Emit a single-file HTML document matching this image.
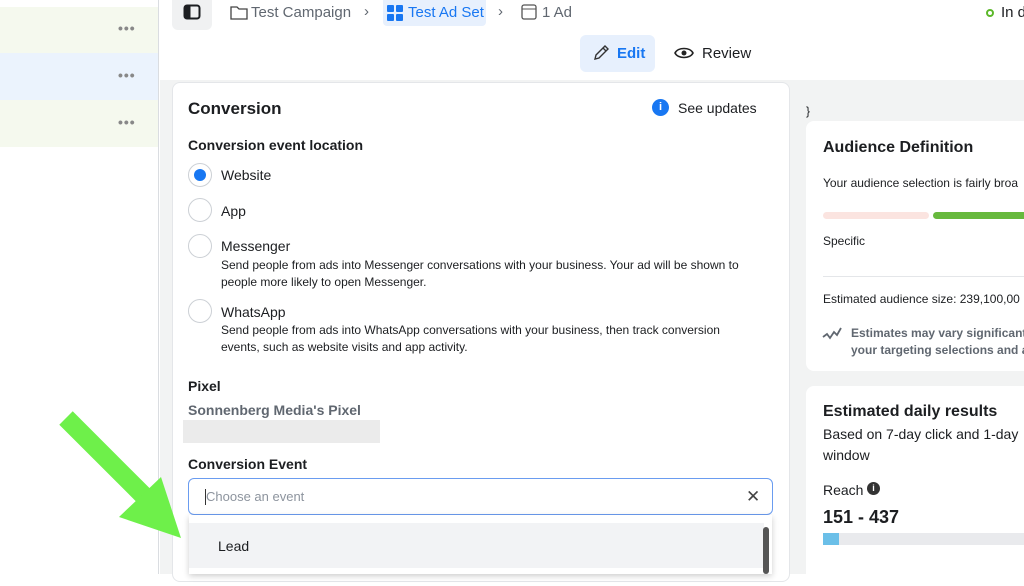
<!DOCTYPE html>
<html><head><meta charset="utf-8"><style>
*{margin:0;padding:0;box-sizing:border-box}
body{width:1024px;height:574px;overflow:hidden;background:#fff;font-family:"Liberation Sans",Arial,sans-serif;color:#1c1e21;position:relative}
.abs{position:absolute}
.dots{position:absolute;left:118px;font-size:14px;color:#888;letter-spacing:1px;font-weight:bold}
.t{position:absolute;white-space:nowrap}
.radio{position:absolute;left:188px;width:24px;height:24px;border:1.5px solid #ccd0d5;border-radius:50%;background:#fff}
.small{font-size:12px;line-height:17px;color:#1c1e21}
</style></head><body>
<div class="abs" style="left:0;top:0;width:159px;height:574px;background:#fff;border-right:1px solid #dadde1"></div>
<div class="abs" style="left:0;top:7px;width:158px;height:46px;background:#f5f9ee"></div>
<div class="abs" style="left:0;top:53px;width:158px;height:47px;background:#ebf3fd"></div>
<div class="abs" style="left:0;top:100px;width:158px;height:47px;background:#f5f9ee"></div>
<div class="dots" style="top:20px">•••</div>
<div class="dots" style="top:67px">•••</div>
<div class="dots" style="top:114px">•••</div>
<div class="abs" style="left:160px;top:80px;width:864px;height:494px;background:#f2f3f3"></div>
<div class="abs" style="left:172px;top:0;width:40px;height:30px;background:#f0f1f2;border-radius:0 0 6px 6px"></div>
<svg class="abs" style="left:183px;top:4px" width="18" height="16" viewBox="0 0 18 16"><rect x="1.5" y="1.5" width="15" height="13" rx="2.5" fill="none" stroke="#1c1e21" stroke-width="2"/><rect x="1.5" y="1.5" width="6" height="13" fill="#1c1e21"/></svg>
<svg class="abs" style="left:230px;top:4px" width="18" height="16" viewBox="0 0 18 16"><path d="M1 3h6l2 2h8v10H1z" fill="none" stroke="#444" stroke-width="1.3"/></svg>
<div class="t" style="left:251px;top:4px;font-size:15px;color:#606770">Test Campaign</div>
<div class="t" style="left:364px;top:3px;font-size:15px;color:#606770">›</div>
<div class="abs" style="left:383px;top:0;width:103px;height:26px;background:#e7f0fd;border-radius:0 0 4px 4px"></div>
<svg class="abs" style="left:386px;top:4px" width="18" height="18" viewBox="0 0 18 18" fill="#1877f2"><rect x="1" y="1" width="7" height="7" rx="1"/><rect x="10" y="1" width="7" height="7" rx="1"/><rect x="1" y="10" width="7" height="7" rx="1"/><rect x="10" y="10" width="7" height="7" rx="1"/></svg>
<div class="t" style="left:408px;top:4px;font-size:15px;color:#1877f2">Test Ad Set</div>
<div class="t" style="left:498px;top:3px;font-size:15px;color:#606770">›</div>
<svg class="abs" style="left:521px;top:4px" width="16" height="16" viewBox="0 0 16 16"><rect x="1" y="1" width="14" height="14" rx="2" fill="none" stroke="#555" stroke-width="1.3"/><path d="M1 5h14" stroke="#555"/></svg>
<div class="t" style="left:542px;top:4px;font-size:15px;color:#606770">1 Ad</div>
<div class="abs" style="left:986px;top:9px;width:8px;height:8px;border:2px solid #5cb82a;border-radius:50%"></div>
<div class="t" style="left:1001px;top:4px;font-size:15px">In d</div>
<div class="abs" style="left:580px;top:35px;width:75px;height:37px;background:#e7f0fd;border-radius:6px"></div>
<svg class="abs" style="left:592px;top:44px" width="18" height="18" viewBox="0 0 18 18"><path d="M3 15l1-4 9-9 3 3-9 9z M11 4l3 3" fill="none" stroke="#333" stroke-width="1.4"/></svg>
<div class="t" style="left:617px;top:45px;font-size:15px;font-weight:bold;color:#1877f2">Edit</div>
<svg class="abs" style="left:674px;top:45px" width="20" height="16" viewBox="0 0 20 16"><path d="M1 8C4 2 16 2 19 8C16 14 4 14 1 8z" fill="none" stroke="#222" stroke-width="1.6"/><circle cx="10" cy="8" r="2.5" fill="#222"/></svg>
<div class="t" style="left:702px;top:45px;font-size:15px">Review</div>
<div class="abs" style="left:172px;top:82px;width:618px;height:500px;background:#fff;border-radius:8px;border:1px solid #e4e6e9"></div>
<div class="t" style="left:188px;top:99px;font-size:17px;font-weight:bold">Conversion</div>
<div class="abs" style="left:652px;top:99px;width:17px;height:17px;border-radius:50%;background:#1877f2;color:#fff;font-size:11px;font-weight:bold;text-align:center;line-height:17px">i</div>
<div class="t" style="left:678px;top:100px;font-size:14px">See updates</div>
<div class="t" style="left:188px;top:137px;font-size:14px;font-weight:bold">Conversion event location</div>
<div class="radio" style="top:163px;"></div>
<div class="abs" style="left:194px;top:169px;width:12px;height:12px;border-radius:50%;background:#1877f2"></div>
<div class="t" style="left:221px;top:167px;font-size:14px">Website</div>
<div class="radio" style="top:198px"></div>
<div class="t" style="left:221px;top:203px;font-size:14px">App</div>
<div class="radio" style="top:234px"></div>
<div class="t" style="left:221px;top:238px;font-size:14px">Messenger</div>
<div class="t small" style="left:221px;top:257px">Send people from ads into Messenger conversations with your business. Your ad will be shown to<br>people more likely to open Messenger.</div>
<div class="radio" style="top:299px"></div>
<div class="t" style="left:221px;top:304px;font-size:14px">WhatsApp</div>
<div class="t small" style="left:221px;top:322px">Send people from ads into WhatsApp conversations with your business, then track conversion<br>events, such as website visits and app activity.</div>
<div class="t" style="left:188px;top:378px;font-size:14px;font-weight:bold">Pixel</div>
<div class="t" style="left:188px;top:402px;font-size:14px;font-weight:bold;color:#606770">Sonnenberg Media's Pixel</div>
<div class="abs" style="left:183px;top:420px;width:197px;height:23px;background:#ebebeb"></div>
<div class="t" style="left:188px;top:456px;font-size:14px;font-weight:bold">Conversion Event</div>
<div class="abs" style="left:188px;top:478px;width:585px;height:37px;border:1.5px solid #6a9cf0;border-radius:6px;background:#fff"></div>
<div class="abs" style="left:205px;top:489px;width:1px;height:16px;background:#333"></div>
<div class="t" style="left:206px;top:489px;font-size:13px;color:#8d949e">Choose an event</div>
<div class="t" style="left:746px;top:487px;font-size:17px;color:#444">✕</div>
<div class="abs" style="left:189px;top:515px;width:583px;height:59px;background:#fff;box-shadow:0 2px 6px rgba(0,0,0,.2)"></div>
<div class="abs" style="left:189px;top:523px;width:575px;height:45px;background:#f2f3f5"></div>
<div class="t" style="left:218px;top:538px;font-size:14px">Lead</div>
<div class="abs" style="left:763px;top:527px;width:6px;height:47px;background:#555;border-radius:3px"></div>
<svg class="abs" style="left:0;top:0" width="200" height="574" viewBox="0 0 200 574"><path d="M66 418L146 498" stroke="#6ef04a" stroke-width="19"/><polygon points="119,517 161,477 181,538" fill="#6ef04a"/></svg>
<div class="t" style="left:806px;top:104px;font-size:12px">}</div>
<div class="abs" style="left:806px;top:121px;width:230px;height:250px;background:#fff;border-radius:8px"></div>
<div class="t" style="left:823px;top:139px;font-size:16px;font-weight:bold">Audience Definition</div>
<div class="t" style="left:823px;top:176px;font-size:12px">Your audience selection is fairly broa</div>
<div class="abs" style="left:823px;top:212px;width:106px;height:7px;background:#fbe4e0;border-radius:4px"></div>
<div class="abs" style="left:933px;top:212px;width:100px;height:7px;background:#67b93d;border-radius:4px"></div>
<div class="t" style="left:823px;top:234px;font-size:12px">Specific</div>
<div class="abs" style="left:823px;top:276px;width:210px;height:1px;background:#e4e6e9"></div>
<div class="t" style="left:823px;top:292px;font-size:12px">Estimated audience size: 239,100,00</div>
<svg class="abs" style="left:822px;top:325px" width="22" height="16" viewBox="0 0 22 16"><path d="M1 12l4-3 3 4 4-6 3 3 4-7" fill="none" stroke="#606770" stroke-width="1.8"/></svg>
<div class="t" style="left:851px;top:325px;font-size:12px;font-weight:bold;color:#606770;line-height:17px">Estimates may vary significantl<br>your targeting selections and a</div>
<div class="abs" style="left:806px;top:386px;width:230px;height:200px;background:#fff;border-radius:8px"></div>
<div class="t" style="left:823px;top:403px;font-size:16px;font-weight:bold">Estimated daily results</div>
<div class="t" style="left:823px;top:424px;font-size:14px;line-height:21px">Based on 7-day click and 1-day<br>window</div>
<div class="t" style="left:823px;top:482px;font-size:14px">Reach</div>
<div class="abs" style="left:867px;top:482px;width:13px;height:13px;border-radius:50%;background:#333;color:#fff;font-size:9px;font-weight:bold;text-align:center;line-height:13px">i</div>
<div class="t" style="left:823px;top:507px;font-size:18px;font-weight:bold">151 - 437</div>
<div class="abs" style="left:823px;top:533px;width:210px;height:12px;background:#e9eaed"></div>
<div class="abs" style="left:823px;top:533px;width:16px;height:12px;background:#6bbfe8"></div>
</body></html>
